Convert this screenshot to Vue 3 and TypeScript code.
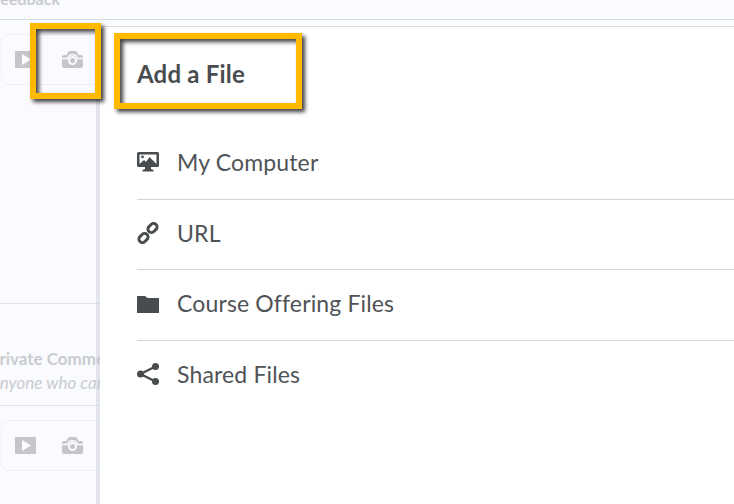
<script setup lang="ts">
const items = [
  { label: 'My Computer', icon: 'computer' },
  { label: 'URL', icon: 'link' },
  { label: 'Course Offering Files', icon: 'folder' },
  { label: 'Shared Files', icon: 'share' },
]
</script>

<template>
  <div class="screen">
    <header class="topbar"><span class="feedback">Feedback</span></header>
    <div class="body">
      <aside class="side">
        <div class="tools first">
          <svg class="tool" viewBox="0 0 21 17"><path fill="#c5c6ca" d="M0 0h21v17H0z"/><path fill="#fbfcff" d="M7 3l9 5.500-9 5.500z"/></svg>
          <svg class="tool" viewBox="0 0 21 17"><path fill="#c5c6ca" d="M2 4h2.500L6 1Q6.500 0 7.500 0h6q1 0 1.500 1L16.500 4H19q2 0 2 2v9q0 2-2 2H2q-2 0-2-2V6q0-2 2-2z"/><path fill="none" stroke="#fbfcff" stroke-width="1.500" d="M0 7.500h5.500a5.200 5.200 0 0 1 10 0H21"/><circle cx="10.500" cy="9.500" r="3.500" fill="none" stroke="#fbfcff" stroke-width="2"/></svg>
        </div>
        <div class="private">
          <div class="priv-title">Private Comments</div>
          <div class="priv-note">Anyone who can</div>
        </div>
        <div class="tools second">
          <svg class="tool" viewBox="0 0 21 17"><path fill="#c5c6ca" d="M0 0h21v17H0z"/><path fill="#fbfcff" d="M7 3l9 5.500-9 5.500z"/></svg>
          <svg class="tool" viewBox="0 0 21 17"><path fill="#c5c6ca" d="M2 4h2.500L6 1Q6.500 0 7.500 0h6q1 0 1.500 1L16.500 4H19q2 0 2 2v9q0 2-2 2H2q-2 0-2-2V6q0-2 2-2z"/><path fill="none" stroke="#fbfcff" stroke-width="1.500" d="M0 7.500h5.500a5.200 5.200 0 0 1 10 0H21"/><circle cx="10.500" cy="9.500" r="3.500" fill="none" stroke="#fbfcff" stroke-width="2"/></svg>
        </div>
      </aside>
      <main class="dialog">
        <h1 class="title">Add a File</h1>
        <ul class="list">
          <li v-for="item in items" :key="item.label" class="row">
            <svg v-if="item.icon === 'computer'" class="icon" viewBox="0 0 22 22"><path fill="#494c4e" fill-rule="evenodd" d="M1.500 1h19A1.500 1.500 0 0 1 22 2.500v12a1.500 1.500 0 0 1-1.500 1.500H14v2l2.500 1v1.500h-11V19L8 18v-2H1.500A1.500 1.500 0 0 1 0 14.500v-12A1.500 1.500 0 0 1 1.500 1zM2.500 3.500v9.500l4.500-4 2 2 3.500-5L19.500 13V3.500zM5.500 4.500a1.400 1.400 0 1 1 0 2.800 1.400 1.400 0 0 1 0-2.800z"/></svg>
            <svg v-else-if="item.icon === 'link'" class="icon" viewBox="0 0 22 22"><g fill="none" stroke="#494c4e" stroke-width="3"><rect x="1.500" y="12.500" width="10" height="7" rx="3.500" transform="rotate(-45 6.500 16)"/><rect x="10.500" y="2.500" width="10" height="7" rx="3.500" transform="rotate(-45 15.500 6)"/></g></svg>
            <svg v-else-if="item.icon === 'folder'" class="icon" viewBox="0 0 22 22"><path fill="#494c4e" d="M.5 4h7.500l2.500 2H21.500a.5.500 0 0 1 .5.500V20.500a.5.500 0 0 1-.5.500H.5a.5.500 0 0 1-.5-.5V4.500a.5.500 0 0 1 .5-.5z"/></svg>
            <svg v-else class="icon" viewBox="0 0 22 22"><g fill="#494c4e"><circle cx="3.500" cy="11" r="3.500"/><circle cx="18.500" cy="3.500" r="3.500"/><circle cx="18.500" cy="18.500" r="3.500"/></g><path fill="none" stroke="#494c4e" stroke-width="2.400" d="M18.500 3.500L3.500 11l15 7.500"/></svg>
            <span class="label">{{ item.label }}</span>
          </li>
        </ul>
      </main>
    </div>
    <div class="mark mark-cam"></div>
    <div class="mark mark-title"></div>
  </div>
</template>

<style>
html, body { margin: 0; background: #fff; }
</style>

<style scoped>
.screen {
  position: relative;
  width: 734px;
  height: 504px;
  overflow: hidden;
  background: #fafbfe;
  font-family: Lato, "Liberation Sans", sans-serif;
}
.topbar {
  height: 19px;
  border-bottom: 1px solid #d8dbe0;
  overflow: hidden;
}
.feedback {
  display: block;
  margin: -11px 0 0 -8px;
  font-size: 16px;
  line-height: 20px;
  font-weight: 700;
  color: #c9cbce;
}
.body {
  display: flex;
  height: 484px;
}
.side {
  width: 100px;
  flex: none;
  display: flex;
  flex-direction: column;
}
.tools {
  display: flex;
  align-items: center;
  gap: 26px;
  height: 49px;
  margin-left: 1px;
  padding-left: 13px;
  border: 1px solid #eef0f4;
  border-right: none;
  border-radius: 8px 0 0 8px;
}
.first { margin-top: 14px; }
.tool { width: 21px; height: 17px; flex: none; }
.private {
  margin-top: 218px;
  border-top: 1px solid #e0e2e6;
  border-bottom: 1px solid #e0e2e6;
  height: 103px;
  box-sizing: border-box;
  overflow: hidden;
  padding-top: 43px;
  white-space: nowrap;
  color: #c9cbce;
  font-size: 17px;
  line-height: 24px;
}
.priv-title { font-weight: 700; margin-left: -11px; }
.priv-note { font-style: italic; margin-left: -11px; }
.second { margin-top: 14px; }
.dialog {
  position: relative;
  flex: 1;
  margin-top: 6px;
  background: #fff;
  border-top: 1px solid #d8dde3;
  padding-left: 37px;
  box-shadow: -4px 0 0 rgba(190, 198, 210, 0.4);
}
.title {
  margin: 32px 0 0;
  font-size: 24px;
  line-height: 30px;
  font-weight: 700;
  letter-spacing: 0.2px;
  color: #494c4e;
}
.list {
  margin: 40px 0 0;
  padding: 0;
  list-style: none;
}
.row {
  display: flex;
  align-items: center;
  gap: 18px;
  height: 70.500px;
  box-sizing: border-box;
  padding-bottom: 3px;
  border-bottom: 1px solid #cdd5db;
}
.row:last-child { border-bottom-color: transparent; }
.icon { width: 22px; height: 22px; flex: none; }
.label {
  font-size: 23px;
  letter-spacing: 0.150px;
  color: #505356;
}
.mark {
  position: absolute;
  box-sizing: border-box;
  border: 6px solid #ffba00;
  box-shadow: 3px 3px 4px rgba(0, 0, 0, 0.75), inset 3px 3px 4px rgba(0, 0, 0, 0.75);
}
.mark-cam { left: 30px; top: 23px; width: 71px; height: 76px; }
.mark-title { left: 114px; top: 33px; width: 188px; height: 76px; }
</style>
